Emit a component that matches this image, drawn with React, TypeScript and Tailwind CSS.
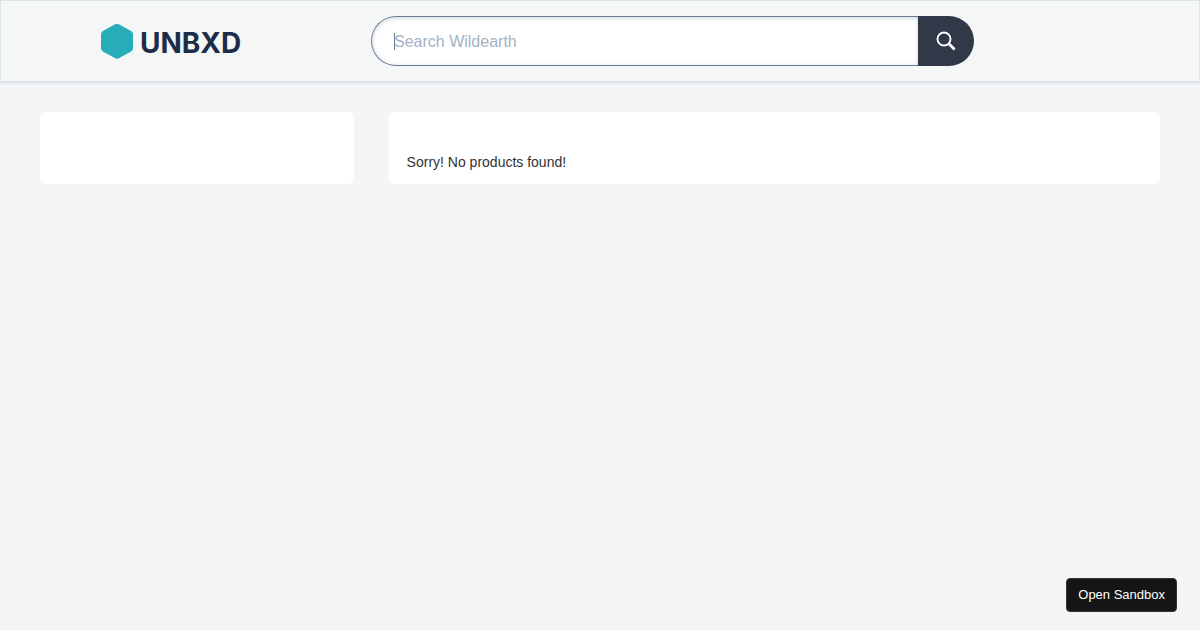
import { useState } from "react";

function Logo() {
  return (
    <a href="#" className="flex items-center gap-1.5" aria-label="UNBXD home">
      <svg viewBox="0 0 33 36" className="h-9 w-[33px]" aria-hidden="true">
        <path
          d="M13.7 1.4Q16 .1 18.3 1.4L30.1 8.1Q32 9.3 32 11.3V25.3Q32 27.3 30.1 28.5L18.3 35.1Q16 36.3 13.7 35.1L1.9 28.5Q0 27.3 0 25.3V11.3Q0 9.3 1.9 8.1Z"
          fill="#27adb7"
        />
      </svg>
      <span className="pt-1 font-['Inter',sans-serif] text-[28px] leading-8 font-bold text-[#1c2d48]">UNBXD</span>
    </a>
  );
}

function SearchBar() {
  const [query, setQuery] = useState("");
  return (
    <form role="search" className="flex h-[50px] w-[603px]" onSubmit={(e) => e.preventDefault()}>
      <div className="relative flex-1">
        <input
          type="text"
          aria-label="Search Wildearth"
          placeholder="Search Wildearth"
          value={query}
          onChange={(e) => setQuery(e.target.value)}
          className="h-full w-full rounded-l-full border border-r-0 border-[#6b7c99] bg-white pt-0.5 pl-[22px] text-base text-[#313848] caret-transparent shadow-[inset_0_1px_4px_rgba(107,124,153,0.35)] outline-none placeholder:text-[#a3b3c4] focus:caret-[#6b7c99]"
        />
        {query === "" && <span className="absolute top-[17px] left-[23px] h-[17px] w-px bg-[#6b7c99]" />}
      </div>
      <button
        type="submit"
        aria-label="Search"
        className="flex w-14 items-center justify-center rounded-r-full bg-[#313848] text-white"
      >
        <svg viewBox="0 0 20 20" className="size-5" fill="none" stroke="currentColor" aria-hidden="true">
          <circle cx="8" cy="8" r="6.5" strokeWidth="1.9" />
          <path d="M12.6 12.6L18.6 18.6" strokeWidth="2.8" />
        </svg>
      </button>
    </form>
  );
}

export default function App() {
  return (
    <div className="min-h-screen bg-[#f3f5f7] font-['Liberation_Sans',Arial,sans-serif] text-[#333333]">
      <header className="flex items-center border border-[#dde1ea] bg-[#f5f7f7] py-[15px] pl-[100px] shadow-[0_1px_3px_rgba(60,70,100,0.14)]">
        <div className="w-[270px]">
          <Logo />
        </div>
        <SearchBar />
      </header>
      <main className="flex items-stretch gap-[35px] px-10 pt-[30px]">
        <aside className="w-[28%] rounded-[5px] bg-white" />
        <section className="flex-1 rounded-[5px] bg-white px-[18px] pt-10 pb-3">
          <p className="text-sm leading-5">Sorry! No products found!</p>
        </section>
      </main>
      <button
        type="button"
        className="fixed right-[23px] bottom-[18px] h-[34px] rounded border border-[#343434] bg-[#151515] px-[11px] text-[13px] text-white"
      >
        Open Sandbox
      </button>
    </div>
  );
}
